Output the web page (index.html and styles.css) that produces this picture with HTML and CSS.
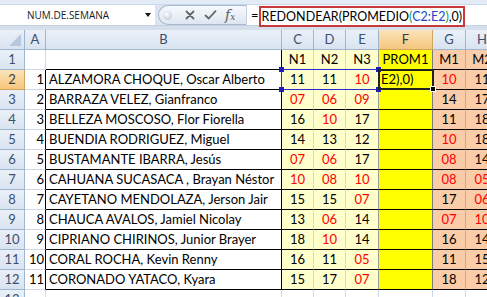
FILE: index.html
```html
<!DOCTYPE html>
<html lang="es">
<head>
<meta charset="utf-8">
<title>Excel</title>
<link rel="stylesheet" href="styles.css">
</head>
<body>
<div class="strip"></div>
<div class="fbar">
  <div class="namebox"><span class="nm">NUM.DE.SEMANA</span><span class="dd"></span></div>
  <div class="btns">
    <span class="dot"></span>
    <svg class="ico xi" width="10" height="10" viewBox="0 0 10 10"><path d="M1.5 1.5 L8.5 8.5 M8.5 1.5 L1.5 8.5" stroke="#666" stroke-width="1.8" fill="none" stroke-linecap="round"/></svg>
    <svg class="ico ck" width="13" height="10" viewBox="0 0 13 10"><path d="M1.5 5.5 L4.8 8.5 L11.5 1.2" stroke="#666" stroke-width="1.8" fill="none" stroke-linecap="round" stroke-linejoin="round"/></svg>
    <span class="fx">f<span class="fxs">x</span></span>
  </div>
  <div class="finput"><span class="eq">=</span><span class="ftext">REDONDEAR(PROMEDIO<span class="pg">(</span><span class="pb">C2:E2</span><span class="pg">)</span>,0)</span></div>
</div>
<div class="gap"></div>
<div class="sheet">
  <div class="corner"></div>
  <div class="ch">A</div><div class="ch">B</div><div class="ch">C</div><div class="ch">D</div><div class="ch">E</div><div class="ch sel">F</div><div class="ch">G</div><div class="ch">H</div>

  <div class="rh">1</div><div class="cell"></div><div class="cell b"></div><div class="cell n">N1</div><div class="cell n">N2</div><div class="cell n ne">N3</div><div class="cell f">PROM1</div><div class="cell m">M1</div><div class="cell m">M2</div>

  <div class="rh sel">2</div><div class="cell a">1</div><div class="cell b">ALZAMORA CHOQUE, Oscar Alberto</div><div class="cell n">11</div><div class="cell n">11</div><div class="cell n ne r">10</div><div class="cell f fl">E2),0)</div><div class="cell m r">10</div><div class="cell m">11</div>

  <div class="rh">3</div><div class="cell a">2</div><div class="cell b">BARRAZA VELEZ, Gianfranco</div><div class="cell n r">07</div><div class="cell n r">06</div><div class="cell n ne r">09</div><div class="cell f"></div><div class="cell m">14</div><div class="cell m">17</div>

  <div class="rh">4</div><div class="cell a">3</div><div class="cell b">BELLEZA MOSCOSO, Flor Fiorella</div><div class="cell n">16</div><div class="cell n r">10</div><div class="cell n ne">17</div><div class="cell f"></div><div class="cell m">11</div><div class="cell m">18</div>

  <div class="rh">5</div><div class="cell a">4</div><div class="cell b">BUENDIA RODRIGUEZ, Miguel</div><div class="cell n">14</div><div class="cell n">13</div><div class="cell n ne">12</div><div class="cell f"></div><div class="cell m r">10</div><div class="cell m">18</div>

  <div class="rh">6</div><div class="cell a">5</div><div class="cell b">BUSTAMANTE IBARRA, Jesús</div><div class="cell n r">07</div><div class="cell n r">06</div><div class="cell n ne">17</div><div class="cell f"></div><div class="cell m r">08</div><div class="cell m">14</div>

  <div class="rh">7</div><div class="cell a">6</div><div class="cell b">CAHUANA SUCASACA , Brayan Néstor</div><div class="cell n r">10</div><div class="cell n r">08</div><div class="cell n ne r">10</div><div class="cell f"></div><div class="cell m r">08</div><div class="cell m r">05</div>

  <div class="rh">8</div><div class="cell a">7</div><div class="cell b">CAYETANO MENDOLAZA, Jerson Jair</div><div class="cell n">15</div><div class="cell n">15</div><div class="cell n ne r">07</div><div class="cell f"></div><div class="cell m">17</div><div class="cell m r">06</div>

  <div class="rh">9</div><div class="cell a">8</div><div class="cell b">CHAUCA AVALOS, Jamiel Nicolay</div><div class="cell n">13</div><div class="cell n r">06</div><div class="cell n ne">14</div><div class="cell f"></div><div class="cell m r">07</div><div class="cell m r">10</div>

  <div class="rh">10</div><div class="cell a">9</div><div class="cell b">CIPRIANO CHIRINOS, Junior Brayer</div><div class="cell n">18</div><div class="cell n r">10</div><div class="cell n ne">14</div><div class="cell f"></div><div class="cell m">16</div><div class="cell m">14</div>

  <div class="rh">11</div><div class="cell a">10</div><div class="cell b">CORAL ROCHA, Kevin Renny</div><div class="cell n">16</div><div class="cell n">11</div><div class="cell n ne r">05</div><div class="cell f"></div><div class="cell m">11</div><div class="cell m">15</div>

  <div class="rh">12</div><div class="cell a">11</div><div class="cell b">CORONADO YATACO, Kyara</div><div class="cell n">15</div><div class="cell n">17</div><div class="cell n ne r">07</div><div class="cell f"></div><div class="cell m">18</div><div class="cell m">12</div>

  <div class="rh">13</div><div class="cell"></div><div class="cell"></div><div class="cell"></div><div class="cell"></div><div class="cell"></div><div class="cell"></div><div class="cell"></div><div class="cell"></div>

  <div class="refbox"><i class="h tl"></i><i class="h tr"></i><i class="h bl"></i><i class="h br"></i></div>
  <div class="active"><i class="handle"></i></div>
</div>
</body>
</html>
```

FILE: styles.css
```css
* { box-sizing: border-box; margin: 0; padding: 0; }
html, body { width: 487px; height: 297px; overflow: hidden; background: #fff; }
body { font-family: Lato, "Liberation Sans", sans-serif; font-size: 13px; color: #000; }

.strip { height: 5px; background: #e3ebf6; border-bottom: 1px solid #cbd8e8; }

.fbar { height: 20px; display: flex; background: #dbe5f2; }
.namebox { width: 155px; background: #fff; display: flex; align-items: center; padding-left: 27px;
  font-family: "Open Sans", sans-serif; font-size: 10px; color: #1a1a1a; }
.nm { flex: 1; }
.dd { width: 0; height: 0; border-left: 3.5px solid transparent; border-right: 3.5px solid transparent;
  border-top: 4px solid #111; margin-right: 4px; }
.btns { margin-left: 3px; width: 88px; height: 20px; border: 1px solid #a7b8cf; border-right: none;
  border-radius: 10px 0 0 10px; background: linear-gradient(#f7fafd, #dde6f1);
  display: flex; align-items: center; padding-left: 4px; }
.dot { width: 9px; height: 9px; border-radius: 50%; background: radial-gradient(circle at 40% 35%, #fff, #c9d2dd 70%, #aab6c4); margin-right: 13px; }
.xi { margin-right: 9px; }
.ck { margin-right: 8px; }
.fx { font-family: "DejaVu Serif", "Liberation Serif", serif; font-style: italic; font-size: 14px; color: #5c5c5c; line-height: 1; }
.fxs { font-size: 9px; }
.finput { flex: 1; background: #fff; display: flex; align-items: center; padding-left: 4px; border-left: 1px solid #c2cfe0; }
.eq { font-size: 13px; }
.ftext { display: inline-block; height: 21px; margin-top: 3px; border: 2px solid #c8393c; padding: 0 1px; line-height: 17px; font-size: 12.5px; color: #000; white-space: nowrap; }
.pg { color: #179a52; }
.pb { color: #2346c8; }

.gap { height: 5px; background: #d5dfec; border-top: 1px solid #c4d1e2; }

.sheet { position: relative; display: grid;
  grid-template-columns: 25px 21px 236px 32px 32px 33px 54px 33px 33px;
  grid-auto-rows: 20px; }

.corner, .ch, .rh { background: linear-gradient(#eaf0f8, #d9e3f0); border-right: 1px solid #9eb6ce; border-bottom: 1px solid #9eb6ce;
  color: #3b4f6e; text-align: center; line-height: 19px; font-size: 13px; }
.corner { position: relative; }
.corner::after { content: ""; position: absolute; right: 3px; bottom: 3px; width: 0; height: 0;
  border-left: 12px solid transparent; border-bottom: 12px solid #b8c8dc; }
.ch.sel, .rh.sel { background: linear-gradient(#fbe3b8, #f6c67e); border-color: #d3a35a; color: #3b3b3b; }

.cell { border-right: 1px solid #d0d7e5; border-bottom: 1px solid #d0d7e5; line-height: 19px;
  white-space: nowrap; overflow: hidden; text-align: center; }
.a { text-align: right; padding-right: 1px; border-right-color: #000; }
.b { text-align: left; padding-left: 3px; border-right-color: #000; border-bottom-color: #000; }
.n { background: #ffffcc; border-bottom-color: #000; border-right-color: #d9d9c8; }
.n.ne { border-right-color: #9a9a9a; }
.f { background: #ffff00; border-bottom-color: #000; border-right-color: #7a7a7a; }
.fl { text-align: left; padding-left: 2px; }
.m { background: #fbcca8; border-bottom-color: #000; border-right-color: #c9a88e; }
.r { color: #ff0000; }

.refbox { position: absolute; left: 281px; top: 39px; width: 98px; height: 21px; border: 1px solid #2b2bd0; }
.h { position: absolute; width: 5px; height: 5px; background: #1f1fb8; }
.tl { left: -3px; top: -3px; }
.tr { right: -3px; top: -3px; }
.bl { left: -3px; bottom: -3px; }
.br { right: -3px; bottom: -3px; }
.active { position: absolute; left: 378px; top: 39px; width: 56px; height: 21px; border: 2px solid #222; }
.handle { position: absolute; right: -4px; bottom: -4px; width: 6px; height: 6px; background: #000; border: 1px solid #fff; }
```
